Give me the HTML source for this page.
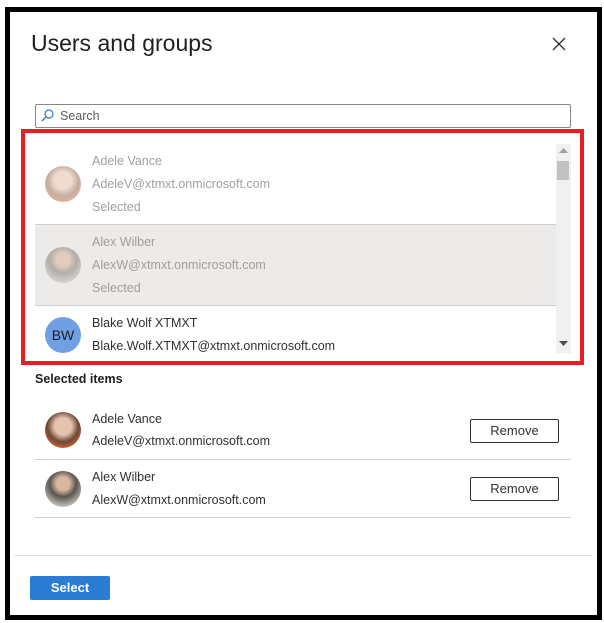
<!DOCTYPE html>
<html><head><meta charset="utf-8"><style>
*{margin:0;padding:0;box-sizing:border-box}
body{width:604px;height:623px;background:#fff;font-family:"Liberation Sans",sans-serif;position:relative;overflow:hidden;color:#323130}
.abs{position:absolute}
.frame{left:5px;top:7px;width:597px;height:613px;border:5px solid #000}
.t{font-size:12.5px;white-space:nowrap}
.g{color:#a19f9d}
.av{width:36px;height:36px;border-radius:50%}
.btn{width:89px;height:24px;border:1px solid #323130;border-radius:2px;font-size:13px;text-align:center;line-height:22px}
</style></head><body>
<div class="abs frame"></div>
<div class="abs" style="left:31px;top:30px;font-size:23px;color:#201f1e">Users and groups</div>
<svg class="abs" style="left:552px;top:37px" width="14" height="14"><path d="M1 1L13 13M13 1L1 13" stroke="#323130" stroke-width="1.3"/></svg>
<div class="abs" style="left:35px;top:104px;width:536px;height:24px;border:1px solid #8a8886;border-radius:2px"></div>
<svg class="abs" style="left:41px;top:109px" width="13" height="13"><circle cx="8" cy="5" r="4" fill="none" stroke="#2b7cd3" stroke-width="1.2"/><path d="M5 8L1 12" stroke="#2b7cd3" stroke-width="1.3"/></svg>
<div class="abs t" style="left:60px;top:109px;color:#605e5c">Search</div>
<div class="abs" style="left:21px;top:129px;width:563px;height:236px;border:4px solid #ed1c24"></div>
<div class="abs" style="left:35px;top:224px;width:521px;height:82px;background:#edebe9;border-top:1px solid #d2d0ce;border-bottom:1px solid #d2d0ce"></div>
<div class="abs" style="left:556px;top:144px;width:15px;height:209px;background:#f0f0f0"></div>
<div class="abs" style="left:557px;top:161px;width:12px;height:19px;background:#c1c1c1"></div>
<svg class="abs" style="left:559px;top:148px" width="9" height="6"><path d="M0 5L4.5 0L9 5Z" fill="#a0a0a0"/></svg>
<svg class="abs" style="left:559px;top:341px" width="9" height="6"><path d="M0 0L4.5 5L9 0Z" fill="#505050"/></svg>
<div class="abs av" style="left:45px;top:166px;background:radial-gradient(circle at 50% 40%,#e6c3b0 0 30%,#9c7a60 55%,#d87a5a 80%);opacity:.6"></div>
<div class="abs t g" style="left:92px;top:154px">Adele Vance</div>
<div class="abs t g" style="left:92px;top:177px">AdeleV@xtmxt.onmicrosoft.com</div>
<div class="abs t g" style="left:92px;top:200px">Selected</div>
<div class="abs av" style="left:45px;top:247px;background:radial-gradient(circle at 50% 35%,#d9b8a0 0 22%,#8a8580 45%,#c8c8c0 80%);opacity:.6"></div>
<div class="abs t g" style="left:92px;top:235px">Alex Wilber</div>
<div class="abs t g" style="left:92px;top:258px">AlexW@xtmxt.onmicrosoft.com</div>
<div class="abs t g" style="left:92px;top:281px">Selected</div>
<div class="abs av" style="left:45px;top:317px;background:#6fa0e4;font-size:14px;text-align:center;line-height:36px;color:#201f1e">BW</div>
<div class="abs t" style="left:92px;top:316px">Blake Wolf XTMXT</div>
<div class="abs t" style="left:92px;top:339px">Blake.Wolf.XTMXT@xtmxt.onmicrosoft.com</div>
<div class="abs" style="left:35px;top:372px;font-size:12.5px;font-weight:bold;color:#201f1e">Selected items</div>
<div class="abs av" style="left:45px;top:412px;background:radial-gradient(circle at 50% 40%,#e6c3b0 0 30%,#6b4a35 55%,#d8603a 80%)"></div>
<div class="abs t" style="left:92px;top:412px">Adele Vance</div>
<div class="abs t" style="left:92px;top:434px">AdeleV@xtmxt.onmicrosoft.com</div>
<div class="abs btn" style="left:470px;top:419px">Remove</div>
<div class="abs" style="left:35px;top:459px;width:536px;height:1px;background:#d2d0ce"></div>
<div class="abs av" style="left:45px;top:471px;background:radial-gradient(circle at 50% 35%,#d9b8a0 0 22%,#5a5550 45%,#c8c8c0 80%)"></div>
<div class="abs t" style="left:92px;top:470px">Alex Wilber</div>
<div class="abs t" style="left:92px;top:493px">AlexW@xtmxt.onmicrosoft.com</div>
<div class="abs btn" style="left:470px;top:477px">Remove</div>
<div class="abs" style="left:35px;top:517px;width:536px;height:1px;background:#d2d0ce"></div>
<div class="abs" style="left:14px;top:555px;width:578px;height:1px;background:#e1dfdd"></div>
<div class="abs" style="left:30px;top:576px;width:80px;height:24px;background:#2b7cd3;border-radius:2px;color:#fff;font-size:13px;font-weight:bold;text-align:center;line-height:24px">Select</div>
</body></html>
